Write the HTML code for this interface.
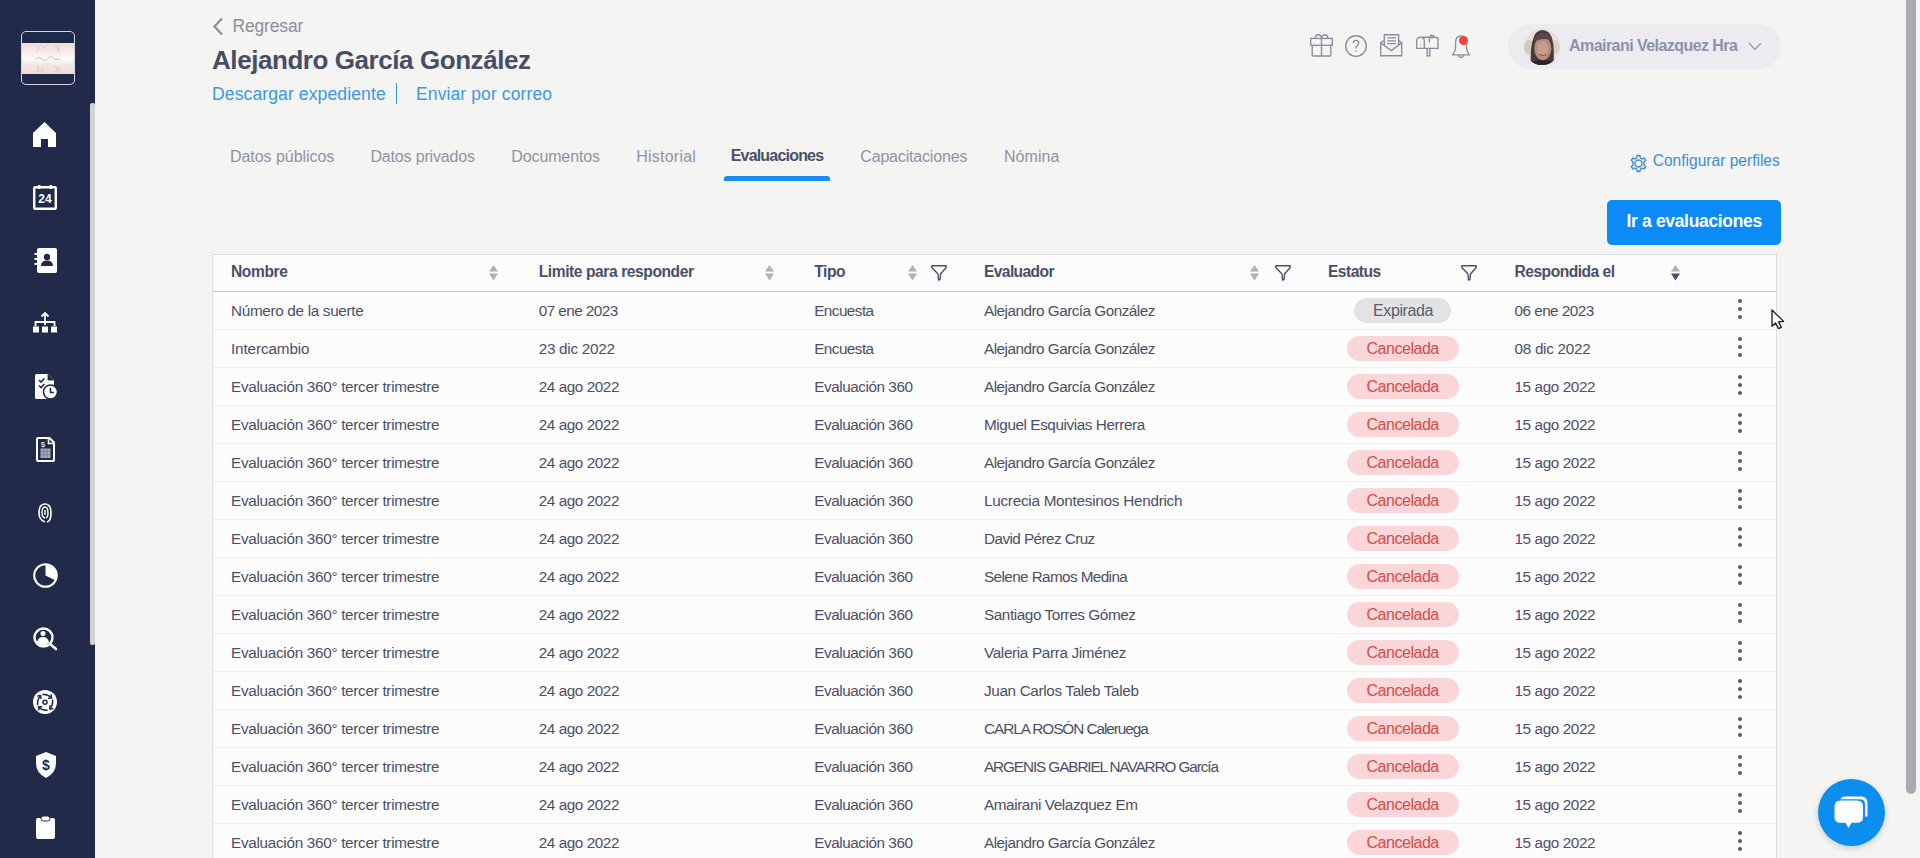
<!DOCTYPE html>
<html><head><meta charset="utf-8"><title>Evaluaciones</title>
<style>
html,body{margin:0;padding:0;}
body{width:1920px;height:858px;overflow:hidden;position:relative;background:#f4f4f3;font-family:'Liberation Sans',sans-serif;}
.t{position:absolute;white-space:nowrap;}
.box{position:absolute;}
.ic{position:absolute;overflow:visible;}
#sb{position:absolute;left:0;top:0;width:95px;height:858px;background:#212a49;}
#sbthumb{position:absolute;left:90px;top:103px;width:5px;height:542px;background:#d3d3d3;border-radius:2px;}
#logo{position:absolute;left:21px;top:31px;width:54px;height:54px;box-sizing:border-box;border:1.5px solid #d6d6de;border-radius:5px;overflow:hidden;background:#212a49;}
#logo .lg1{position:absolute;left:0;top:10.5px;width:100%;height:31px;background:linear-gradient(180deg,#eedcd6 0%,#f6ece8 30%,#fbfbfb 50%,#f4e8e4 70%,#ecdcd6 100%);}
#avatar{background:radial-gradient(circle at 50% 45%,#c9a08f 0%,#b58a7a 35%,#5a4440 60%,#2b2526 80%);}
</style></head><body>
<div id="sb"></div><div id="sbthumb"></div><div id="logo"><div class="lg1"><svg width="51" height="31" viewBox="0 0 51 31" style="position:absolute;left:0;top:0"><g fill="none" stroke="#b9aea8" stroke-width="0.6" opacity="0.8"><path d="M16 3 Q18 7 15 10 M19 2 Q21 6 24 5 M33 3 Q35 7 38 6 M36 2 Q35 5 37 9 M15 22 Q18 25 16 29 M20 23 Q22 27 19 30 M33 22 Q36 25 34 29 M38 23 Q35 26 37 30"/><path d="M13 16 Q17 13 20 16 Q23 19 26 15 Q29 12 32 16 Q35 18 38 15" stroke="#9a9aa8" stroke-width="0.7"/></g></svg></div></div><svg class="ic" style="left:33px;top:122px" width="23" height="25" viewBox="0 0 23 25"><path d="M11.5 0 L23 11 L23 25 L15 25 L15 17 L8 17 L8 25 L0 25 L0 11 Z" fill="#fff"/></svg>
<svg class="ic" style="left:33px;top:185px" width="24" height="25" viewBox="0 0 24 25"><rect x="1.2" y="2.2" width="21.6" height="21.6" rx="1" fill="none" stroke="#fff" stroke-width="2.4"/><rect x="5" y="0" width="2.4" height="4" fill="#fff"/><rect x="16.6" y="0" width="2.4" height="4" fill="#fff"/><text x="12" y="18" text-anchor="middle" font-family="Liberation Sans" font-weight="700" font-size="12" fill="#fff">24</text></svg>
<svg class="ic" style="left:34px;top:248px" width="23" height="25" viewBox="0 0 23 25"><rect x="3" y="0" width="20" height="25" rx="2" fill="#fff"/><rect x="0.5" y="5" width="4" height="2" fill="#fff"/><rect x="0.5" y="10" width="4" height="2" fill="#fff"/><rect x="0.5" y="15" width="4" height="2" fill="#fff"/><circle cx="13" cy="9" r="3.2" fill="#212a49"/><path d="M7 18 Q7 12.5 13 12.5 Q19 12.5 19 18 Z" fill="#212a49"/></svg>
<svg class="ic" style="left:33px;top:312px" width="24" height="21" viewBox="0 0 24 21"><path d="M12 1 L12 13 M8.5 4.5 L12 1 L15.5 4.5 M2.5 14 L2.5 10 L21.5 10 L21.5 14" fill="none" stroke="#fff" stroke-width="1.8"/><rect x="0" y="14.5" width="6" height="6" fill="#fff"/><rect x="9" y="14.5" width="6" height="6" fill="#fff"/><rect x="18" y="14.5" width="6" height="6" fill="#fff"/></svg>
<svg class="ic" style="left:35px;top:374px" width="22" height="25" viewBox="0 0 22 25"><path d="M1.5 0 L13 0 L19 6 L19 25 L1.5 25 Q0 25 0 23.5 L0 1.5 Q0 0 1.5 0 Z" fill="#fff"/><path d="M13 0 L13 6 L19 6" fill="#212a49" stroke="#212a49" stroke-width="0.8"/><path d="M4 6 L6 8 L9.5 4.5 M4 11.5 L6 13.5 L9.5 10" fill="none" stroke="#212a49" stroke-width="1.6"/><circle cx="15.5" cy="18" r="7" fill="#fff" stroke="#212a49" stroke-width="1.6"/><path d="M15.5 14 L15.5 18.5 L19 18.5" fill="none" stroke="#212a49" stroke-width="1.6"/></svg>
<svg class="ic" style="left:35.5px;top:437px" width="19" height="25" viewBox="0 0 19 25"><path d="M2 1 L13.5 1 L18 5.5 L18 23 Q18 24 17 24 L2 24 Q1 24 1 23 L1 2 Q1 1 2 1 Z" fill="none" stroke="#fff" stroke-width="2" stroke-linejoin="round"/><path d="M12.5 1.5 L12.5 6.5 L17.5 6.5" fill="none" stroke="#fff" stroke-width="1.6"/><text x="7" y="10.2" text-anchor="middle" font-family="Liberation Sans" font-weight="700" font-size="8" fill="#dde">$</text><rect x="4.5" y="11.5" width="10" height="9.5" fill="#a9abc4"/><path d="M7.8 11.5 L7.8 21 M11.2 11.5 L11.2 21 M4.5 14.5 L14.5 14.5 M4.5 17.8 L14.5 17.8" stroke="#6c7090" stroke-width="0.7"/></svg>
<svg class="ic" style="left:38px;top:503px" width="14" height="20" viewBox="0 0 14 20"><path d="M7 19 Q1 17 1 10 Q1 1 7 1 Q13 1 13 10 Q13 18 9 19" fill="none" stroke="#fff" stroke-width="1.6"/><path d="M7 15 Q4 14 4 10 Q4 4 7 4 Q10 4 10 10 Q10 14 8 15" fill="none" stroke="#fff" stroke-width="1.4"/><path d="M7 7 L7 12" stroke="#fff" stroke-width="1.4"/></svg>
<svg class="ic" style="left:32.5px;top:562.5px" width="25" height="25" viewBox="0 0 25 25"><circle cx="12.5" cy="12.5" r="11.3" fill="none" stroke="#fff" stroke-width="2"/><path d="M12.5 1.2 A11.3 11.3 0 0 1 22.8 17.5 L12.5 12.5 Z" fill="#fff"/></svg>
<svg class="ic" style="left:33px;top:627px" width="24" height="23" viewBox="0 0 24 23"><circle cx="10.5" cy="10.5" r="9" fill="none" stroke="#fff" stroke-width="2.4"/><circle cx="10" cy="6.5" r="2.5" fill="#fff"/><path d="M4 15.5 Q5 10 10 10 Q15 10 16 15.5 Q13.5 18.5 10 18.5 Q6.5 18.5 4 15.5 Z" fill="#fff"/><path d="M17 17 L23 22" stroke="#fff" stroke-width="2.6" stroke-linecap="round"/></svg>
<svg class="ic" style="left:33px;top:689.5px" width="24" height="24" viewBox="0 0 24 24"><circle cx="12" cy="12" r="12" fill="#fff"/><g fill="none" stroke="#212a49" stroke-width="1.5" stroke-linecap="round" stroke-linejoin="round"><path d="M4.6 14.5 Q4.3 9.5 7.5 5.8"/><path d="M4.8 6 L7.6 5.6 L7.9 8.3"/><path d="M10 4.6 Q15 4 18.3 7.8"/><path d="M15.7 8.3 L18.4 8 L18.2 5"/><path d="M19.6 10 Q20 15.5 16.8 18.8"/><path d="M17 15.8 L16.8 19 L19.8 18.8"/><path d="M14.2 20.2 Q9 20.6 5.6 17"/><path d="M8.6 16.8 L5.6 17 L5.8 20"/><circle cx="12" cy="12.2" r="2"/></g></svg>
<svg class="ic" style="left:35.5px;top:751.5px" width="20" height="26" viewBox="0 0 20 26"><path d="M10 0 L20 4 L20 11 Q20 21 10 26 Q0 21 0 11 L0 4 Z" fill="#fff"/><text x="10" y="17.5" text-anchor="middle" font-family="Liberation Sans" font-weight="700" font-size="14" fill="#212a49">$</text></svg>
<svg class="ic" style="left:36px;top:816px" width="19" height="23" viewBox="0 0 19 23"><rect x="0" y="2" width="19" height="21" rx="2" fill="#fff"/><rect x="5" y="0" width="9" height="5" rx="2.5" fill="#fff" stroke="#212a49" stroke-width="1"/></svg>
<svg class="ic" style="left:212px;top:17px" width="12" height="19" viewBox="0 0 12 19"><path d="M10 1.5 L2.5 9.5 L10 17.5" fill="none" stroke="#8b8e9b" stroke-width="2.2"/></svg>
<div class="t" style="left:232.5px;top:18.19px;font-size:17.5px;line-height:17.5px;color:#8b8e9b;font-weight:400;letter-spacing:-0.164px;">Regresar</div>
<div class="t" style="left:212px;top:46.79px;font-size:26px;line-height:26px;color:#484d66;font-weight:700;letter-spacing:-0.435px;">Alejandro García González</div>
<div class="t" style="left:212px;top:85.60px;font-size:17.6px;line-height:17.6px;color:#3d98e2;font-weight:400;letter-spacing:0.082px;">Descargar expediente</div>
<div class="box" style="left:396px;top:83px;width:1px;height:21px;background:#3d98e2"></div>
<div class="t" style="left:416px;top:85.69px;font-size:17.5px;line-height:17.5px;color:#3d98e2;font-weight:400;letter-spacing:0.113px;">Enviar por correo</div>
<svg class="ic" style="left:1310px;top:34px" width="23" height="23" viewBox="0 0 23 23" fill="none" stroke="#8b8c9c" stroke-width="1.35">
<rect x="0.7" y="4.4" width="21.6" height="6.9"/><path d="M2.2 11.3 L2.2 21 Q2.2 22 3.2 22 L19.8 22 Q20.8 22 20.8 21 L20.8 11.3"/><path d="M11.5 4.4 L11.5 22"/>
<path d="M5.2 4.4 Q5.2 0.7 8.2 0.7 Q11.2 0.7 11.5 4.4 Q11.8 0.7 14.8 0.7 Q17.8 0.7 17.8 4.4"/></svg>
<svg class="ic" style="left:1344.5px;top:34.5px" width="22" height="22" viewBox="0 0 22 22" fill="none" stroke="#8b8c9c" stroke-width="1.35">
<circle cx="11" cy="11" r="10.3"/><path d="M8.3 8.2 Q8.3 5.3 11 5.3 Q13.7 5.3 13.7 8 Q13.7 9.6 12.2 10.6 Q11 11.4 11 13.5"/><path d="M11 15.6 L11 16.8" stroke-width="1.5"/></svg>
<svg class="ic" style="left:1380px;top:34px" width="23" height="23" viewBox="0 0 23 23" fill="none" stroke="#8b8c9c" stroke-width="1.35">
<path d="M0.7 8.8 L0.7 21.7 L21.7 21.7 L21.7 8.8 L11.2 16.6 Z"/><path d="M0.7 8.8 L4.3 6.2 M21.7 8.8 L18.6 6.4"/><path d="M4.3 11.5 L4.3 0.7 L18.6 0.7 L18.6 11.5"/><path d="M7.2 3.9 L15.9 3.9 M7.2 6.8 L15.9 6.8 M7.2 9.6 L15.9 9.6"/></svg>
<svg class="ic" style="left:1416px;top:33px" width="23" height="24" viewBox="0 0 23 24" fill="none" stroke="#8b8c9c" stroke-width="1.35">
<path d="M4.5 4.2 L19.5 4.2 Q22 4.2 22 6.7 L22 15.4 L0.7 15.4 L0.7 8 Q0.7 4.2 4.5 4.2 Q8.3 4.2 8.3 8 L8.3 15.4"/><path d="M11.2 15.4 L11.2 22.8 L13.8 22.8 L13.8 15.4"/><path d="M13.4 9.5 L13.4 5 L15.2 2 L17.6 2.8 L15.6 5.6"/><path d="M4.3 12 L5.2 12" stroke-width="1"/></svg>
<svg class="ic" style="left:1452px;top:35px" width="18" height="23" viewBox="0 0 18 23" fill="none" stroke="#8b8c9c" stroke-width="1.35">
<path d="M9 0.8 Q3.6 0.8 3.6 7.5 L3.6 12 Q3.6 15.5 0.7 19.8 L17.3 19.8 Q14.4 15.5 14.4 12 L14.4 7.5 Q14.4 0.8 9 0.8 Z"/><path d="M6.5 20 Q6.8 22.3 9 22.3 Q11.2 22.3 11.5 20"/></svg>
<div class="box" style="left:1458.8px;top:35.5px;width:9.4px;height:9.4px;border-radius:50%;background:#f2413f"></div>
<div class="box" style="left:1508px;top:24px;width:273px;height:45px;border-radius:23px;background:#ebebf0"></div>
<svg class="ic" style="left:1524px;top:29px" width="36" height="36" viewBox="0 0 36 36"><defs><clipPath id="avc"><circle cx="18" cy="18" r="18"/></clipPath></defs><g clip-path="url(#avc)"><rect width="36" height="36" fill="#e4e2da"/><ellipse cx="5" cy="18" rx="5" ry="7" fill="#cfcbb8"/><ellipse cx="31" cy="18" rx="5" ry="7" fill="#d6d2c4"/><path d="M7 36 Q6 22 8.5 12 Q11 1 18.5 1 Q26 1 28.5 11 Q30.5 20 29.5 36 Z" fill="#4a3840"/><ellipse cx="18.8" cy="19.5" rx="8.6" ry="11.8" fill="#b88a7d"/><ellipse cx="18.8" cy="20" rx="5.5" ry="8" fill="#c99d8c"/><path d="M9.5 11 Q13 3 20 3.5 Q26.5 4 28 12 Q22 8.5 13 11.5 Z" fill="#5a4450"/><path d="M15 25.5 Q18.8 27.5 22.5 25.5" stroke="#8a4e50" stroke-width="1" fill="none"/><path d="M5 36 Q11 30 18.8 31.5 Q26 30 32 36 Z" fill="#2a2226"/></g></svg>
<div class="t" style="left:1569px;top:38.46px;font-size:16px;line-height:16px;color:#8b93ab;font-weight:700;letter-spacing:-0.553px;">Amairani Velazquez Hra</div>
<svg class="ic" style="left:1748px;top:42px" width="14" height="9" viewBox="0 0 14 9"><path d="M1 1 L7 7.5 L13 1" fill="none" stroke="#9b9fb0" stroke-width="1.5"/></svg>
<div class="t" style="left:230px;top:148.96px;font-size:16px;line-height:16px;color:#8f93a3;font-weight:400;letter-spacing:-0.05px;">Datos públicos</div>
<div class="t" style="left:370.4px;top:148.96px;font-size:16px;line-height:16px;color:#8f93a3;font-weight:400;letter-spacing:-0.163px;">Datos privados</div>
<div class="t" style="left:511.3px;top:148.96px;font-size:16px;line-height:16px;color:#8f93a3;font-weight:400;letter-spacing:-0.124px;">Documentos</div>
<div class="t" style="left:636.3px;top:148.96px;font-size:16px;line-height:16px;color:#8f93a3;font-weight:400;letter-spacing:0.221px;">Historial</div>
<div class="t" style="left:730.7px;top:147.86px;font-size:16px;line-height:16px;color:#4b5068;font-weight:700;letter-spacing:-0.807px;">Evaluaciones</div>
<div class="t" style="left:860.3px;top:148.96px;font-size:16px;line-height:16px;color:#8f93a3;font-weight:400;letter-spacing:-0.177px;">Capacitaciones</div>
<div class="t" style="left:1004px;top:148.96px;font-size:16px;line-height:16px;color:#8f93a3;font-weight:400;letter-spacing:0.033px;">Nómina</div>
<div class="box" style="left:724px;top:176px;width:106px;height:5px;border-radius:3px 3px 0 0;background:#1a8cf0"></div>
<svg class="ic" style="left:1629px;top:153.5px" width="19" height="19" viewBox="0 0 24 24" fill="none" stroke="#3d8fd3" stroke-width="1.8">
<path d="M10.3 2 L13.7 2 L14.3 4.8 Q15.6 5.3 16.6 6.1 L19.3 5.2 L21 8.1 L18.9 10 Q19.1 12 18.9 14 L21 15.9 L19.3 18.8 L16.6 17.9 Q15.6 18.7 14.3 19.2 L13.7 22 L10.3 22 L9.7 19.2 Q8.4 18.7 7.4 17.9 L4.7 18.8 L3 15.9 L5.1 14 Q4.9 12 5.1 10 L3 8.1 L4.7 5.2 L7.4 6.1 Q8.4 5.3 9.7 4.8 Z"/><circle cx="12" cy="12" r="4.4"/></svg>
<div class="t" style="left:1652.7px;top:153.49px;font-size:15.6px;line-height:15.6px;color:#3d8fd3;font-weight:400;letter-spacing:-0.017px;">Configurar perfiles</div>
<div class="box" style="left:1607px;top:200px;width:174px;height:44.5px;border-radius:5px;background:#0a8bf5"></div>
<div class="t" style="left:1626.5px;top:212.89px;font-size:17.5px;line-height:17.5px;color:#ffffff;font-weight:700;letter-spacing:-0.339px;">Ir a evaluaciones</div>
<div class="box" style="left:212px;top:254px;width:1565px;height:620px;background:#fcfcfc;border:1px solid #dcdcdc;box-sizing:border-box"></div>
<div class="box" style="left:213px;top:290.5px;width:1563px;height:1.2px;background:#c8c8c2"></div>
<div class="box" style="left:213px;top:329px;width:1563px;height:1px;background:#efeff3"></div>
<div class="box" style="left:213px;top:367px;width:1563px;height:1px;background:#efeff3"></div>
<div class="box" style="left:213px;top:405px;width:1563px;height:1px;background:#efeff3"></div>
<div class="box" style="left:213px;top:443px;width:1563px;height:1px;background:#efeff3"></div>
<div class="box" style="left:213px;top:481px;width:1563px;height:1px;background:#efeff3"></div>
<div class="box" style="left:213px;top:519px;width:1563px;height:1px;background:#efeff3"></div>
<div class="box" style="left:213px;top:557px;width:1563px;height:1px;background:#efeff3"></div>
<div class="box" style="left:213px;top:595px;width:1563px;height:1px;background:#efeff3"></div>
<div class="box" style="left:213px;top:633px;width:1563px;height:1px;background:#efeff3"></div>
<div class="box" style="left:213px;top:671px;width:1563px;height:1px;background:#efeff3"></div>
<div class="box" style="left:213px;top:709px;width:1563px;height:1px;background:#efeff3"></div>
<div class="box" style="left:213px;top:747px;width:1563px;height:1px;background:#efeff3"></div>
<div class="box" style="left:213px;top:785px;width:1563px;height:1px;background:#efeff3"></div>
<div class="box" style="left:213px;top:823px;width:1563px;height:1px;background:#efeff3"></div>
<div class="t" style="left:231px;top:264.09px;font-size:15.6px;line-height:15.6px;color:#4a4f68;font-weight:700;letter-spacing:-0.409px;">Nombre</div>
<div class="t" style="left:538.7px;top:264.09px;font-size:15.6px;line-height:15.6px;color:#4a4f68;font-weight:700;letter-spacing:-0.421px;">Limite para responder</div>
<div class="t" style="left:814.2px;top:264.09px;font-size:15.6px;line-height:15.6px;color:#4a4f68;font-weight:700;letter-spacing:-0.434px;">Tipo</div>
<div class="t" style="left:984px;top:264.09px;font-size:15.6px;line-height:15.6px;color:#4a4f68;font-weight:700;letter-spacing:-0.616px;">Evaluador</div>
<div class="t" style="left:1328px;top:264.09px;font-size:15.6px;line-height:15.6px;color:#4a4f68;font-weight:700;letter-spacing:-0.526px;">Estatus</div>
<div class="t" style="left:1514.5px;top:264.09px;font-size:15.6px;line-height:15.6px;color:#4a4f68;font-weight:700;letter-spacing:-0.499px;">Respondida el</div>
<svg class="ic" style="left:488.75px;top:265px" width="9" height="16" viewBox="0 0 9 16"><path d="M4.5 0 L9 6.5 L0 6.5 Z" fill="#b0b0b8"/><path d="M0 8.5 L9 8.5 L4.5 15.5 Z" fill="#b0b0b8"/></svg>
<svg class="ic" style="left:764.9px;top:265px" width="9" height="16" viewBox="0 0 9 16"><path d="M4.5 0 L9 6.5 L0 6.5 Z" fill="#b0b0b8"/><path d="M0 8.5 L9 8.5 L4.5 15.5 Z" fill="#b0b0b8"/></svg>
<svg class="ic" style="left:907.6px;top:265px" width="9" height="16" viewBox="0 0 9 16"><path d="M4.5 0 L9 6.5 L0 6.5 Z" fill="#b0b0b8"/><path d="M0 8.5 L9 8.5 L4.5 15.5 Z" fill="#b0b0b8"/></svg>
<svg class="ic" style="left:1250.4px;top:265px" width="9" height="16" viewBox="0 0 9 16"><path d="M4.5 0 L9 6.5 L0 6.5 Z" fill="#b0b0b8"/><path d="M0 8.5 L9 8.5 L4.5 15.5 Z" fill="#b0b0b8"/></svg>
<svg class="ic" style="left:1670.5px;top:265px" width="9" height="16" viewBox="0 0 9 16"><path d="M4.5 0 L9 6.5 L0 6.5 Z" fill="#b0b0b8"/><path d="M0 8.5 L9 8.5 L4.5 15.5 Z" fill="#4a4f68"/></svg>
<svg class="ic" style="left:930.9px;top:265px" width="16" height="16" viewBox="0 0 16 16"><path d="M0.8 0.8 L15.2 0.8 L15.2 2.5 L9.5 9 L9 14.5 L7.5 15 L7 9 L0.8 2.5 Z" fill="none" stroke="#4a4f68" stroke-width="1.4" stroke-linejoin="round"/></svg>
<svg class="ic" style="left:1274.7px;top:265px" width="16" height="16" viewBox="0 0 16 16"><path d="M0.8 0.8 L15.2 0.8 L15.2 2.5 L9.5 9 L9 14.5 L7.5 15 L7 9 L0.8 2.5 Z" fill="none" stroke="#4a4f68" stroke-width="1.4" stroke-linejoin="round"/></svg>
<svg class="ic" style="left:1461px;top:265px" width="16" height="16" viewBox="0 0 16 16"><path d="M0.8 0.8 L15.2 0.8 L15.2 2.5 L9.5 9 L9 14.5 L7.5 15 L7 9 L0.8 2.5 Z" fill="none" stroke="#4a4f68" stroke-width="1.4" stroke-linejoin="round"/></svg>
<div class="t" style="left:231px;top:303.05px;font-size:15.3px;line-height:15.3px;color:#4c5064;font-weight:400;letter-spacing:-0.327px;">Número de la suerte</div>
<div class="t" style="left:538.7px;top:303.05px;font-size:15.3px;line-height:15.3px;color:#4c5064;font-weight:400;letter-spacing:-0.556px;">07 ene 2023</div>
<div class="t" style="left:814.2px;top:303.05px;font-size:15.3px;line-height:15.3px;color:#4c5064;font-weight:400;letter-spacing:-0.553px;">Encuesta</div>
<div class="t" style="left:984px;top:303.05px;font-size:15.3px;line-height:15.3px;color:#4c5064;font-weight:400;letter-spacing:-0.513px;">Alejandro García González</div>
<div class="t" style="left:1514.5px;top:303.05px;font-size:15.3px;line-height:15.3px;color:#4c5064;font-weight:400;letter-spacing:-0.531px;">06 ene 2023</div>
<div class="box" style="left:1354px;top:298px;width:97px;height:25px;border-radius:13px;background:#e3e3e6"></div>
<div class="t" style="left:1373px;top:303.16px;font-size:16px;line-height:16px;color:#5a5d6c;font-weight:400;letter-spacing:-0.393px;">Expirada</div>
<div class="box" style="left:1737.5px;top:299px;width:4px;height:4px;border-radius:50%;background:#55596b"></div>
<div class="box" style="left:1737.5px;top:307px;width:4px;height:4px;border-radius:50%;background:#55596b"></div>
<div class="box" style="left:1737.5px;top:315px;width:4px;height:4px;border-radius:50%;background:#55596b"></div>
<div class="t" style="left:231px;top:341.05px;font-size:15.3px;line-height:15.3px;color:#4c5064;font-weight:400;letter-spacing:-0.141px;">Intercambio</div>
<div class="t" style="left:538.7px;top:341.05px;font-size:15.3px;line-height:15.3px;color:#4c5064;font-weight:400;letter-spacing:-0.289px;">23 dic 2022</div>
<div class="t" style="left:814.2px;top:341.05px;font-size:15.3px;line-height:15.3px;color:#4c5064;font-weight:400;letter-spacing:-0.553px;">Encuesta</div>
<div class="t" style="left:984px;top:341.05px;font-size:15.3px;line-height:15.3px;color:#4c5064;font-weight:400;letter-spacing:-0.513px;">Alejandro García González</div>
<div class="t" style="left:1514.5px;top:341.05px;font-size:15.3px;line-height:15.3px;color:#4c5064;font-weight:400;letter-spacing:-0.289px;">08 dic 2022</div>
<div class="box" style="left:1347px;top:336px;width:112px;height:25px;border-radius:13px;background:#fad6d8"></div>
<div class="t" style="left:1366.5px;top:340.96px;font-size:16px;line-height:16px;color:#d24d4e;font-weight:400;letter-spacing:-0.475px;">Cancelada</div>
<div class="box" style="left:1737.5px;top:337px;width:4px;height:4px;border-radius:50%;background:#55596b"></div>
<div class="box" style="left:1737.5px;top:345px;width:4px;height:4px;border-radius:50%;background:#55596b"></div>
<div class="box" style="left:1737.5px;top:353px;width:4px;height:4px;border-radius:50%;background:#55596b"></div>
<div class="t" style="left:231px;top:379.05px;font-size:15.3px;line-height:15.3px;color:#4c5064;font-weight:400;letter-spacing:-0.3px;">Evaluación 360° tercer trimestre</div>
<div class="t" style="left:538.7px;top:379.05px;font-size:15.3px;line-height:15.3px;color:#4c5064;font-weight:400;letter-spacing:-0.436px;">24 ago 2022</div>
<div class="t" style="left:814.2px;top:379.05px;font-size:15.3px;line-height:15.3px;color:#4c5064;font-weight:400;letter-spacing:-0.446px;">Evaluación 360</div>
<div class="t" style="left:984px;top:379.05px;font-size:15.3px;line-height:15.3px;color:#4c5064;font-weight:400;letter-spacing:-0.513px;">Alejandro García González</div>
<div class="t" style="left:1514.5px;top:379.05px;font-size:15.3px;line-height:15.3px;color:#4c5064;font-weight:400;letter-spacing:-0.406px;">15 ago 2022</div>
<div class="box" style="left:1347px;top:374px;width:112px;height:25px;border-radius:13px;background:#fad6d8"></div>
<div class="t" style="left:1366.5px;top:378.96px;font-size:16px;line-height:16px;color:#d24d4e;font-weight:400;letter-spacing:-0.475px;">Cancelada</div>
<div class="box" style="left:1737.5px;top:375px;width:4px;height:4px;border-radius:50%;background:#55596b"></div>
<div class="box" style="left:1737.5px;top:383px;width:4px;height:4px;border-radius:50%;background:#55596b"></div>
<div class="box" style="left:1737.5px;top:391px;width:4px;height:4px;border-radius:50%;background:#55596b"></div>
<div class="t" style="left:231px;top:417.05px;font-size:15.3px;line-height:15.3px;color:#4c5064;font-weight:400;letter-spacing:-0.3px;">Evaluación 360° tercer trimestre</div>
<div class="t" style="left:538.7px;top:417.05px;font-size:15.3px;line-height:15.3px;color:#4c5064;font-weight:400;letter-spacing:-0.436px;">24 ago 2022</div>
<div class="t" style="left:814.2px;top:417.05px;font-size:15.3px;line-height:15.3px;color:#4c5064;font-weight:400;letter-spacing:-0.446px;">Evaluación 360</div>
<div class="t" style="left:984px;top:417.05px;font-size:15.3px;line-height:15.3px;color:#4c5064;font-weight:400;letter-spacing:-0.421px;">Miguel Esquivias Herrera</div>
<div class="t" style="left:1514.5px;top:417.05px;font-size:15.3px;line-height:15.3px;color:#4c5064;font-weight:400;letter-spacing:-0.406px;">15 ago 2022</div>
<div class="box" style="left:1347px;top:412px;width:112px;height:25px;border-radius:13px;background:#fad6d8"></div>
<div class="t" style="left:1366.5px;top:416.96px;font-size:16px;line-height:16px;color:#d24d4e;font-weight:400;letter-spacing:-0.475px;">Cancelada</div>
<div class="box" style="left:1737.5px;top:413px;width:4px;height:4px;border-radius:50%;background:#55596b"></div>
<div class="box" style="left:1737.5px;top:421px;width:4px;height:4px;border-radius:50%;background:#55596b"></div>
<div class="box" style="left:1737.5px;top:429px;width:4px;height:4px;border-radius:50%;background:#55596b"></div>
<div class="t" style="left:231px;top:455.05px;font-size:15.3px;line-height:15.3px;color:#4c5064;font-weight:400;letter-spacing:-0.3px;">Evaluación 360° tercer trimestre</div>
<div class="t" style="left:538.7px;top:455.05px;font-size:15.3px;line-height:15.3px;color:#4c5064;font-weight:400;letter-spacing:-0.436px;">24 ago 2022</div>
<div class="t" style="left:814.2px;top:455.05px;font-size:15.3px;line-height:15.3px;color:#4c5064;font-weight:400;letter-spacing:-0.446px;">Evaluación 360</div>
<div class="t" style="left:984px;top:455.05px;font-size:15.3px;line-height:15.3px;color:#4c5064;font-weight:400;letter-spacing:-0.513px;">Alejandro García González</div>
<div class="t" style="left:1514.5px;top:455.05px;font-size:15.3px;line-height:15.3px;color:#4c5064;font-weight:400;letter-spacing:-0.406px;">15 ago 2022</div>
<div class="box" style="left:1347px;top:450px;width:112px;height:25px;border-radius:13px;background:#fad6d8"></div>
<div class="t" style="left:1366.5px;top:454.96px;font-size:16px;line-height:16px;color:#d24d4e;font-weight:400;letter-spacing:-0.475px;">Cancelada</div>
<div class="box" style="left:1737.5px;top:451px;width:4px;height:4px;border-radius:50%;background:#55596b"></div>
<div class="box" style="left:1737.5px;top:459px;width:4px;height:4px;border-radius:50%;background:#55596b"></div>
<div class="box" style="left:1737.5px;top:467px;width:4px;height:4px;border-radius:50%;background:#55596b"></div>
<div class="t" style="left:231px;top:493.05px;font-size:15.3px;line-height:15.3px;color:#4c5064;font-weight:400;letter-spacing:-0.3px;">Evaluación 360° tercer trimestre</div>
<div class="t" style="left:538.7px;top:493.05px;font-size:15.3px;line-height:15.3px;color:#4c5064;font-weight:400;letter-spacing:-0.436px;">24 ago 2022</div>
<div class="t" style="left:814.2px;top:493.05px;font-size:15.3px;line-height:15.3px;color:#4c5064;font-weight:400;letter-spacing:-0.446px;">Evaluación 360</div>
<div class="t" style="left:984px;top:493.05px;font-size:15.3px;line-height:15.3px;color:#4c5064;font-weight:400;letter-spacing:-0.269px;">Lucrecia Montesinos Hendrich</div>
<div class="t" style="left:1514.5px;top:493.05px;font-size:15.3px;line-height:15.3px;color:#4c5064;font-weight:400;letter-spacing:-0.406px;">15 ago 2022</div>
<div class="box" style="left:1347px;top:488px;width:112px;height:25px;border-radius:13px;background:#fad6d8"></div>
<div class="t" style="left:1366.5px;top:492.96px;font-size:16px;line-height:16px;color:#d24d4e;font-weight:400;letter-spacing:-0.475px;">Cancelada</div>
<div class="box" style="left:1737.5px;top:489px;width:4px;height:4px;border-radius:50%;background:#55596b"></div>
<div class="box" style="left:1737.5px;top:497px;width:4px;height:4px;border-radius:50%;background:#55596b"></div>
<div class="box" style="left:1737.5px;top:505px;width:4px;height:4px;border-radius:50%;background:#55596b"></div>
<div class="t" style="left:231px;top:531.05px;font-size:15.3px;line-height:15.3px;color:#4c5064;font-weight:400;letter-spacing:-0.3px;">Evaluación 360° tercer trimestre</div>
<div class="t" style="left:538.7px;top:531.05px;font-size:15.3px;line-height:15.3px;color:#4c5064;font-weight:400;letter-spacing:-0.436px;">24 ago 2022</div>
<div class="t" style="left:814.2px;top:531.05px;font-size:15.3px;line-height:15.3px;color:#4c5064;font-weight:400;letter-spacing:-0.446px;">Evaluación 360</div>
<div class="t" style="left:984px;top:531.05px;font-size:15.3px;line-height:15.3px;color:#4c5064;font-weight:400;letter-spacing:-0.574px;">David Pérez Cruz</div>
<div class="t" style="left:1514.5px;top:531.05px;font-size:15.3px;line-height:15.3px;color:#4c5064;font-weight:400;letter-spacing:-0.406px;">15 ago 2022</div>
<div class="box" style="left:1347px;top:526px;width:112px;height:25px;border-radius:13px;background:#fad6d8"></div>
<div class="t" style="left:1366.5px;top:530.96px;font-size:16px;line-height:16px;color:#d24d4e;font-weight:400;letter-spacing:-0.475px;">Cancelada</div>
<div class="box" style="left:1737.5px;top:527px;width:4px;height:4px;border-radius:50%;background:#55596b"></div>
<div class="box" style="left:1737.5px;top:535px;width:4px;height:4px;border-radius:50%;background:#55596b"></div>
<div class="box" style="left:1737.5px;top:543px;width:4px;height:4px;border-radius:50%;background:#55596b"></div>
<div class="t" style="left:231px;top:569.05px;font-size:15.3px;line-height:15.3px;color:#4c5064;font-weight:400;letter-spacing:-0.3px;">Evaluación 360° tercer trimestre</div>
<div class="t" style="left:538.7px;top:569.05px;font-size:15.3px;line-height:15.3px;color:#4c5064;font-weight:400;letter-spacing:-0.436px;">24 ago 2022</div>
<div class="t" style="left:814.2px;top:569.05px;font-size:15.3px;line-height:15.3px;color:#4c5064;font-weight:400;letter-spacing:-0.446px;">Evaluación 360</div>
<div class="t" style="left:984px;top:569.05px;font-size:15.3px;line-height:15.3px;color:#4c5064;font-weight:400;letter-spacing:-0.608px;">Selene Ramos Medina</div>
<div class="t" style="left:1514.5px;top:569.05px;font-size:15.3px;line-height:15.3px;color:#4c5064;font-weight:400;letter-spacing:-0.406px;">15 ago 2022</div>
<div class="box" style="left:1347px;top:564px;width:112px;height:25px;border-radius:13px;background:#fad6d8"></div>
<div class="t" style="left:1366.5px;top:568.96px;font-size:16px;line-height:16px;color:#d24d4e;font-weight:400;letter-spacing:-0.475px;">Cancelada</div>
<div class="box" style="left:1737.5px;top:565px;width:4px;height:4px;border-radius:50%;background:#55596b"></div>
<div class="box" style="left:1737.5px;top:573px;width:4px;height:4px;border-radius:50%;background:#55596b"></div>
<div class="box" style="left:1737.5px;top:581px;width:4px;height:4px;border-radius:50%;background:#55596b"></div>
<div class="t" style="left:231px;top:607.05px;font-size:15.3px;line-height:15.3px;color:#4c5064;font-weight:400;letter-spacing:-0.3px;">Evaluación 360° tercer trimestre</div>
<div class="t" style="left:538.7px;top:607.05px;font-size:15.3px;line-height:15.3px;color:#4c5064;font-weight:400;letter-spacing:-0.436px;">24 ago 2022</div>
<div class="t" style="left:814.2px;top:607.05px;font-size:15.3px;line-height:15.3px;color:#4c5064;font-weight:400;letter-spacing:-0.446px;">Evaluación 360</div>
<div class="t" style="left:984px;top:607.05px;font-size:15.3px;line-height:15.3px;color:#4c5064;font-weight:400;letter-spacing:-0.422px;">Santiago Torres Gómez</div>
<div class="t" style="left:1514.5px;top:607.05px;font-size:15.3px;line-height:15.3px;color:#4c5064;font-weight:400;letter-spacing:-0.406px;">15 ago 2022</div>
<div class="box" style="left:1347px;top:602px;width:112px;height:25px;border-radius:13px;background:#fad6d8"></div>
<div class="t" style="left:1366.5px;top:606.96px;font-size:16px;line-height:16px;color:#d24d4e;font-weight:400;letter-spacing:-0.475px;">Cancelada</div>
<div class="box" style="left:1737.5px;top:603px;width:4px;height:4px;border-radius:50%;background:#55596b"></div>
<div class="box" style="left:1737.5px;top:611px;width:4px;height:4px;border-radius:50%;background:#55596b"></div>
<div class="box" style="left:1737.5px;top:619px;width:4px;height:4px;border-radius:50%;background:#55596b"></div>
<div class="t" style="left:231px;top:645.05px;font-size:15.3px;line-height:15.3px;color:#4c5064;font-weight:400;letter-spacing:-0.3px;">Evaluación 360° tercer trimestre</div>
<div class="t" style="left:538.7px;top:645.05px;font-size:15.3px;line-height:15.3px;color:#4c5064;font-weight:400;letter-spacing:-0.436px;">24 ago 2022</div>
<div class="t" style="left:814.2px;top:645.05px;font-size:15.3px;line-height:15.3px;color:#4c5064;font-weight:400;letter-spacing:-0.446px;">Evaluación 360</div>
<div class="t" style="left:984px;top:645.05px;font-size:15.3px;line-height:15.3px;color:#4c5064;font-weight:400;letter-spacing:-0.35px;">Valeria Parra Jiménez</div>
<div class="t" style="left:1514.5px;top:645.05px;font-size:15.3px;line-height:15.3px;color:#4c5064;font-weight:400;letter-spacing:-0.406px;">15 ago 2022</div>
<div class="box" style="left:1347px;top:640px;width:112px;height:25px;border-radius:13px;background:#fad6d8"></div>
<div class="t" style="left:1366.5px;top:644.96px;font-size:16px;line-height:16px;color:#d24d4e;font-weight:400;letter-spacing:-0.475px;">Cancelada</div>
<div class="box" style="left:1737.5px;top:641px;width:4px;height:4px;border-radius:50%;background:#55596b"></div>
<div class="box" style="left:1737.5px;top:649px;width:4px;height:4px;border-radius:50%;background:#55596b"></div>
<div class="box" style="left:1737.5px;top:657px;width:4px;height:4px;border-radius:50%;background:#55596b"></div>
<div class="t" style="left:231px;top:683.05px;font-size:15.3px;line-height:15.3px;color:#4c5064;font-weight:400;letter-spacing:-0.3px;">Evaluación 360° tercer trimestre</div>
<div class="t" style="left:538.7px;top:683.05px;font-size:15.3px;line-height:15.3px;color:#4c5064;font-weight:400;letter-spacing:-0.436px;">24 ago 2022</div>
<div class="t" style="left:814.2px;top:683.05px;font-size:15.3px;line-height:15.3px;color:#4c5064;font-weight:400;letter-spacing:-0.446px;">Evaluación 360</div>
<div class="t" style="left:984px;top:683.05px;font-size:15.3px;line-height:15.3px;color:#4c5064;font-weight:400;letter-spacing:-0.352px;">Juan Carlos Taleb Taleb</div>
<div class="t" style="left:1514.5px;top:683.05px;font-size:15.3px;line-height:15.3px;color:#4c5064;font-weight:400;letter-spacing:-0.406px;">15 ago 2022</div>
<div class="box" style="left:1347px;top:678px;width:112px;height:25px;border-radius:13px;background:#fad6d8"></div>
<div class="t" style="left:1366.5px;top:682.96px;font-size:16px;line-height:16px;color:#d24d4e;font-weight:400;letter-spacing:-0.475px;">Cancelada</div>
<div class="box" style="left:1737.5px;top:679px;width:4px;height:4px;border-radius:50%;background:#55596b"></div>
<div class="box" style="left:1737.5px;top:687px;width:4px;height:4px;border-radius:50%;background:#55596b"></div>
<div class="box" style="left:1737.5px;top:695px;width:4px;height:4px;border-radius:50%;background:#55596b"></div>
<div class="t" style="left:231px;top:721.05px;font-size:15.3px;line-height:15.3px;color:#4c5064;font-weight:400;letter-spacing:-0.3px;">Evaluación 360° tercer trimestre</div>
<div class="t" style="left:538.7px;top:721.05px;font-size:15.3px;line-height:15.3px;color:#4c5064;font-weight:400;letter-spacing:-0.436px;">24 ago 2022</div>
<div class="t" style="left:814.2px;top:721.05px;font-size:15.3px;line-height:15.3px;color:#4c5064;font-weight:400;letter-spacing:-0.446px;">Evaluación 360</div>
<div class="t" style="left:984px;top:721.05px;font-size:15.3px;line-height:15.3px;color:#4c5064;font-weight:400;letter-spacing:-1.029px;">CARLA ROSÓN Caleruega</div>
<div class="t" style="left:1514.5px;top:721.05px;font-size:15.3px;line-height:15.3px;color:#4c5064;font-weight:400;letter-spacing:-0.406px;">15 ago 2022</div>
<div class="box" style="left:1347px;top:716px;width:112px;height:25px;border-radius:13px;background:#fad6d8"></div>
<div class="t" style="left:1366.5px;top:720.96px;font-size:16px;line-height:16px;color:#d24d4e;font-weight:400;letter-spacing:-0.475px;">Cancelada</div>
<div class="box" style="left:1737.5px;top:717px;width:4px;height:4px;border-radius:50%;background:#55596b"></div>
<div class="box" style="left:1737.5px;top:725px;width:4px;height:4px;border-radius:50%;background:#55596b"></div>
<div class="box" style="left:1737.5px;top:733px;width:4px;height:4px;border-radius:50%;background:#55596b"></div>
<div class="t" style="left:231px;top:759.05px;font-size:15.3px;line-height:15.3px;color:#4c5064;font-weight:400;letter-spacing:-0.3px;">Evaluación 360° tercer trimestre</div>
<div class="t" style="left:538.7px;top:759.05px;font-size:15.3px;line-height:15.3px;color:#4c5064;font-weight:400;letter-spacing:-0.436px;">24 ago 2022</div>
<div class="t" style="left:814.2px;top:759.05px;font-size:15.3px;line-height:15.3px;color:#4c5064;font-weight:400;letter-spacing:-0.446px;">Evaluación 360</div>
<div class="t" style="left:984px;top:759.05px;font-size:15.3px;line-height:15.3px;color:#4c5064;font-weight:400;letter-spacing:-1.093px;">ARGENIS GABRIEL NAVARRO García</div>
<div class="t" style="left:1514.5px;top:759.05px;font-size:15.3px;line-height:15.3px;color:#4c5064;font-weight:400;letter-spacing:-0.406px;">15 ago 2022</div>
<div class="box" style="left:1347px;top:754px;width:112px;height:25px;border-radius:13px;background:#fad6d8"></div>
<div class="t" style="left:1366.5px;top:758.96px;font-size:16px;line-height:16px;color:#d24d4e;font-weight:400;letter-spacing:-0.475px;">Cancelada</div>
<div class="box" style="left:1737.5px;top:755px;width:4px;height:4px;border-radius:50%;background:#55596b"></div>
<div class="box" style="left:1737.5px;top:763px;width:4px;height:4px;border-radius:50%;background:#55596b"></div>
<div class="box" style="left:1737.5px;top:771px;width:4px;height:4px;border-radius:50%;background:#55596b"></div>
<div class="t" style="left:231px;top:797.05px;font-size:15.3px;line-height:15.3px;color:#4c5064;font-weight:400;letter-spacing:-0.3px;">Evaluación 360° tercer trimestre</div>
<div class="t" style="left:538.7px;top:797.05px;font-size:15.3px;line-height:15.3px;color:#4c5064;font-weight:400;letter-spacing:-0.436px;">24 ago 2022</div>
<div class="t" style="left:814.2px;top:797.05px;font-size:15.3px;line-height:15.3px;color:#4c5064;font-weight:400;letter-spacing:-0.446px;">Evaluación 360</div>
<div class="t" style="left:984px;top:797.05px;font-size:15.3px;line-height:15.3px;color:#4c5064;font-weight:400;letter-spacing:-0.423px;">Amairani Velazquez Em</div>
<div class="t" style="left:1514.5px;top:797.05px;font-size:15.3px;line-height:15.3px;color:#4c5064;font-weight:400;letter-spacing:-0.406px;">15 ago 2022</div>
<div class="box" style="left:1347px;top:792px;width:112px;height:25px;border-radius:13px;background:#fad6d8"></div>
<div class="t" style="left:1366.5px;top:796.96px;font-size:16px;line-height:16px;color:#d24d4e;font-weight:400;letter-spacing:-0.475px;">Cancelada</div>
<div class="box" style="left:1737.5px;top:793px;width:4px;height:4px;border-radius:50%;background:#55596b"></div>
<div class="box" style="left:1737.5px;top:801px;width:4px;height:4px;border-radius:50%;background:#55596b"></div>
<div class="box" style="left:1737.5px;top:809px;width:4px;height:4px;border-radius:50%;background:#55596b"></div>
<div class="t" style="left:231px;top:835.05px;font-size:15.3px;line-height:15.3px;color:#4c5064;font-weight:400;letter-spacing:-0.3px;">Evaluación 360° tercer trimestre</div>
<div class="t" style="left:538.7px;top:835.05px;font-size:15.3px;line-height:15.3px;color:#4c5064;font-weight:400;letter-spacing:-0.436px;">24 ago 2022</div>
<div class="t" style="left:814.2px;top:835.05px;font-size:15.3px;line-height:15.3px;color:#4c5064;font-weight:400;letter-spacing:-0.446px;">Evaluación 360</div>
<div class="t" style="left:984px;top:835.05px;font-size:15.3px;line-height:15.3px;color:#4c5064;font-weight:400;letter-spacing:-0.513px;">Alejandro García González</div>
<div class="t" style="left:1514.5px;top:835.05px;font-size:15.3px;line-height:15.3px;color:#4c5064;font-weight:400;letter-spacing:-0.406px;">15 ago 2022</div>
<div class="box" style="left:1347px;top:830px;width:112px;height:25px;border-radius:13px;background:#fad6d8"></div>
<div class="t" style="left:1366.5px;top:834.96px;font-size:16px;line-height:16px;color:#d24d4e;font-weight:400;letter-spacing:-0.475px;">Cancelada</div>
<div class="box" style="left:1737.5px;top:831px;width:4px;height:4px;border-radius:50%;background:#55596b"></div>
<div class="box" style="left:1737.5px;top:839px;width:4px;height:4px;border-radius:50%;background:#55596b"></div>
<div class="box" style="left:1737.5px;top:847px;width:4px;height:4px;border-radius:50%;background:#55596b"></div>
<svg class="ic" style="left:1771px;top:309px" width="15" height="21" viewBox="0 0 15 21"><path d="M1 1 L1 17.3 L4.6 14 L7.6 19.6 L10.3 18.4 L7.6 12.9 L12.6 12.4 Z" fill="#fff" stroke="#1a1a1a" stroke-width="1.3" stroke-linejoin="round"/></svg>
<div class="box" style="left:1906px;top:-10px;width:10px;height:804px;border-radius:5px;background:#a9a9b1"></div>
<div class="box" style="left:1818px;top:779px;width:67px;height:67px;border-radius:50%;background:#0c8eee;box-shadow:0 2px 6px rgba(0,0,0,0.18)"></div>
<svg class="ic" style="left:1832px;top:794.5px" width="40" height="40" viewBox="0 0 40 40"><path d="M8.5 4.2 Q9.5 1.5 13 1.5 L29 1.5 Q35.5 1.5 35.5 8 L35.5 21.5 L33 21.5 L33 9.5 Q33 4.2 28 4.2 Z" fill="#fff"/><path d="M2.5 11.5 Q2.5 5.5 8.5 5.5 L25 5.5 Q31 5.5 31 11.5 L31 22 Q31 27.8 25 27.8 L19.5 27.8 L16.5 33 L13.5 27.8 L8.5 27.8 Q2.5 27.8 2.5 22 Z" fill="#fff"/></svg>

</body></html>
